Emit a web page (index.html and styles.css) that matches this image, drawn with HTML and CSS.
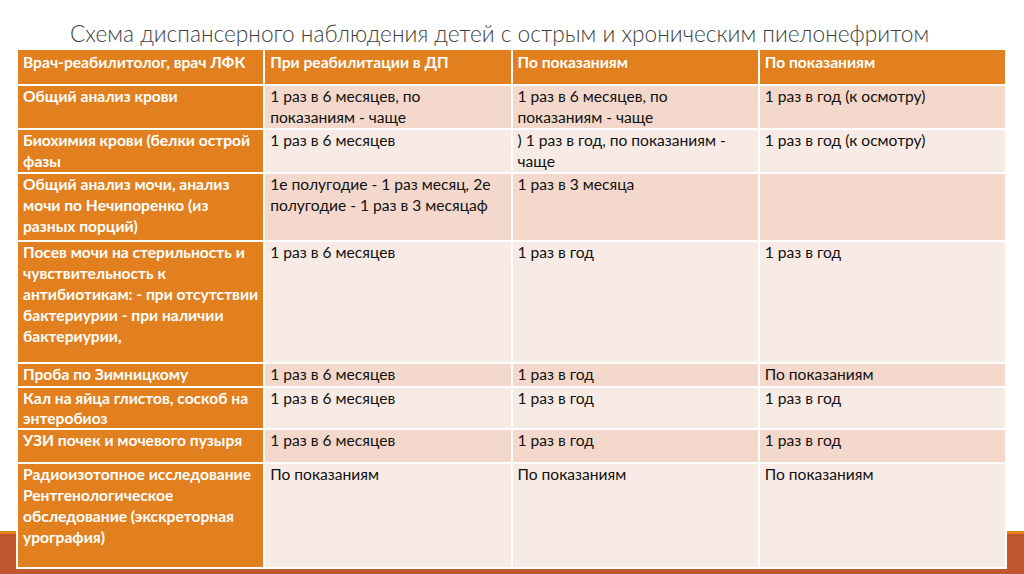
FILE: index.html
```html
<!DOCTYPE html>
<html lang="ru">
<head>
<meta charset="utf-8">
<title>Схема диспансерного наблюдения</title>
<link rel="stylesheet" href="styles.css">
</head>
<body>
<div class="slide">
  <div class="band"></div>
  <h1 class="title">Схема диспансерного наблюдения детей с острым и хроническим пиелонефритом</h1>
  <table class="grid">
    <colgroup><col><col><col><col></colgroup>
    <tr class="head">
      <td class="lead">Врач-реабилитолог, врач ЛФК</td>
      <td>При реабилитации в ДП</td>
      <td>По показаниям</td>
      <td>По показаниям</td>
    </tr>
    <tr class="dark h42">
      <td class="lead">Общий анализ крови</td>
      <td>1 раз в 6 месяцев, по показаниям - чаще</td>
      <td>1 раз в 6 месяцев, по показаниям - чаще</td>
      <td>1 раз в год (к осмотру)</td>
    </tr>
    <tr class="light h42">
      <td class="lead">Биохимия крови (белки острой фазы</td>
      <td>1 раз в 6 месяцев</td>
      <td>) 1 раз в год, по показаниям - чаще</td>
      <td>1 раз в год (к осмотру)</td>
    </tr>
    <tr class="dark h66">
      <td class="lead">Общий анализ мочи, анализ мочи по Нечипоренко (из разных порций)</td>
      <td>1е полугодие - 1 раз месяц, 2е полугодие - 1 раз в 3 месяцаф</td>
      <td>1 раз в 3 месяца</td>
      <td></td>
    </tr>
    <tr class="light h120">
      <td class="lead">Посев мочи на стерильность и чувствительность к антибиотикам: - при отсутствии бактериурии - при наличии бактериурии,</td>
      <td>1 раз в 6 месяцев</td>
      <td>1 раз в год</td>
      <td>1 раз в год</td>
    </tr>
    <tr class="dark h22">
      <td class="lead">Проба по Зимницкому</td>
      <td>1 раз в 6 месяцев</td>
      <td>1 раз в год</td>
      <td>По показаниям</td>
    </tr>
    <tr class="light h40">
      <td class="lead">Кал на яйца глистов, соскоб на энтеробиоз</td>
      <td>1 раз в 6 месяцев</td>
      <td>1 раз в год</td>
      <td>1 раз в год</td>
    </tr>
    <tr class="dark h32">
      <td class="lead">УЗИ почек и мочевого пузыря</td>
      <td>1 раз в 6 месяцев</td>
      <td>1 раз в год</td>
      <td>1 раз в год</td>
    </tr>
    <tr class="light h103">
      <td class="lead">Радиоизотопное исследование Рентгенологическое обследование (экскреторная урография)</td>
      <td>По показаниям</td>
      <td>По показаниям</td>
      <td>По показаниям</td>
    </tr>
  </table>
</div>
</body>
</html>
```
FILE: styles.css
```css
html, body {
  margin: 0;
  padding: 0;
  background: #ffffff;
}
.slide {
  position: relative;
  width: 1024px;
  height: 574px;
  overflow: hidden;
  background: #ffffff;
  font-family: Lato, "Liberation Sans", sans-serif;
}
.band {
  position: absolute;
  left: 0;
  right: 0;
  top: 531px;
  bottom: 0;
  background: #bf5630;
  border-top: 3px solid #e2821f;
}
.title {
  position: relative;
  margin: 0;
  padding: 19px 0 0 70px;
  height: 29px;
  font-weight: 300;
  font-size: 22.7px;
  line-height: 30px;
  color: #3f3f3f;
  white-space: nowrap;
}
.grid {
  position: relative;
  margin-left: 16px;
  width: 991px;
  table-layout: fixed;
  border-collapse: separate;
  border-spacing: 2px;
  background: #ffffff;
  font-size: 15.6px;
  line-height: 21px;
}
.grid td {
  vertical-align: top;
  padding: 0 4px 0 5px;
  color: #111111;
  overflow: hidden;
}
.grid .lead {
  background: #e27f1e;
  color: #ffffff;
  font-weight: 700;
}
.head td {
  background: #e27f1e;
  color: #ffffff;
  font-weight: 700;
  height: 34px;
  padding-top: 2px;
  box-sizing: border-box;
}
.dark td { background: #f3d8cb; }
.light td { background: #f8ebe6; }
.dark td.lead, .light td.lead { background: #e27f1e; }
.h22 td { height: 22px; }
.h32 td { height: 32px; }
.h40 td { height: 40px; line-height: 20px; }
.h42 td { height: 42px; }
.h66 td { height: 66px; }
.h103 td { height: 103px; }
.h120 td { height: 120px; }
```
